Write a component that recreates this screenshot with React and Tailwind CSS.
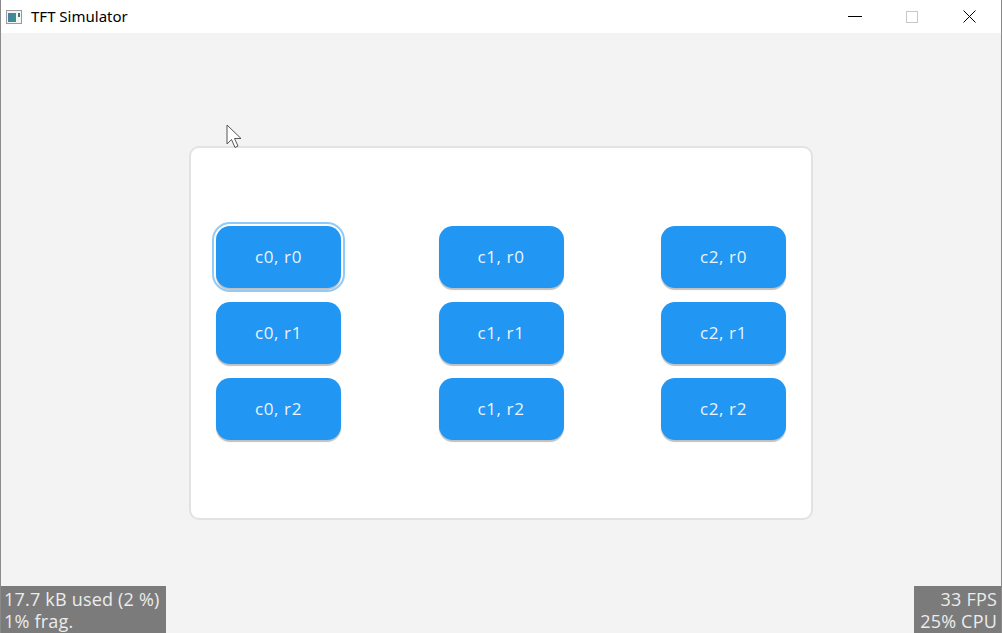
import React from "react";

const F = { fontFamily: "'Open Sans', Lato, sans-serif" };

const Btn = ({ label, focused }) => (
  <button
    className={
      "h-[62px] w-[125px] rounded-[14px] bg-[#2196f3] text-[17px] tracking-[0.6px] text-[#eaf4fe] shadow-[0_2px_1px_rgba(0,0,0,0.25)] " +
      (focused ? "outline-2 outline-offset-2 outline-[#90caf9]" : "")
    }
    style={F}
  >
    {label}
  </button>
);

export default function App() {
  const rows = [0, 1, 2];
  const cols = [0, 1, 2];
  return (
    <div className="relative flex h-[633px] w-[1002px] flex-col overflow-hidden border-x border-[#8a8a8a] bg-[#f3f3f3]" style={{ fontFamily: "'Noto Sans', sans-serif" }}>
      <div className="flex h-[33px] shrink-0 items-center bg-white">
        <svg width="16" height="14" viewBox="0 0 16 14" className="ml-[5px]">
          <rect x="0.5" y="0.5" width="15" height="13" fill="#f4f4f4" stroke="#9a9a9a" />
          <rect x="2" y="3" width="8" height="9" fill="#3c8f8a" />
          <rect x="2" y="3" width="4" height="9" fill="#4a7fa8" />
          <rect x="12" y="3" width="2" height="4" fill="#2f7f7a" />
        </svg>
        <span className="ml-[9px] text-[15px] text-black" style={{ fontFamily: "'Segoe UI', 'Noto Sans', sans-serif" }}>TFT Simulator</span>
        <div className="ml-auto mr-[9px] flex h-full items-center">
          <div className="flex h-full w-[46px] items-center justify-center">
            <div className="h-px w-[14px] bg-black" />
          </div>
          <div className="flex h-full w-[68px] items-center justify-center">
            <div className="h-[12px] w-[12px] border border-[#c8c8c8]" />
          </div>
          <div className="flex h-full w-[46px] items-center justify-center">
            <svg width="13" height="13" viewBox="0 0 13 13">
              <path d="M0.5 0.5L12.5 12.5M12.5 0.5L0.5 12.5" stroke="#000" strokeWidth="1" />
            </svg>
          </div>
        </div>
      </div>
      <div className="relative flex-1">
        <div className="ml-[188px] mt-[113px] h-[374px] w-[624px] rounded-[10px] border-2 border-[#e2e2e2] bg-white px-[25px] pt-[78px]">
          <div className="grid grid-cols-[125px_125px_125px] justify-between gap-y-[14px]">
            {rows.map((r) =>
              cols.map((c) => (
                <Btn key={`${c}-${r}`} label={`c${c}, r${r}`} focused={c === 0 && r === 0} />
              ))
            )}
          </div>
        </div>
        <svg className="absolute left-[225px] top-[91px]" width="20" height="28" viewBox="0 0 20 28">
          <path d="M1 1 L1 20 L5.5 15.5 L9 23.5 L12 22 L8.5 14.5 L15 14.5 Z" fill="#fff" stroke="#555" strokeWidth="1" strokeLinejoin="round" />
        </svg>
        <div className="absolute bottom-0 left-[-1px] w-[166px] bg-[#7b7b7b] pl-[4px] pt-[2px] pb-[1px] text-[18px] leading-[22px] tracking-[0.2px] text-[#ececec]" style={F}>
          <div>17.7 kB used (2 %)</div>
          <div>1% frag.</div>
        </div>
        <div className="absolute bottom-0 right-[-1px] w-[88px] bg-[#7b7b7b] pr-[5px] pt-[2px] pb-[1px] text-right text-[18px] leading-[22px] tracking-[0.2px] text-[#ececec]" style={F}>
          <div>33 FPS</div>
          <div>25% CPU</div>
        </div>
      </div>
    </div>
  );
}
